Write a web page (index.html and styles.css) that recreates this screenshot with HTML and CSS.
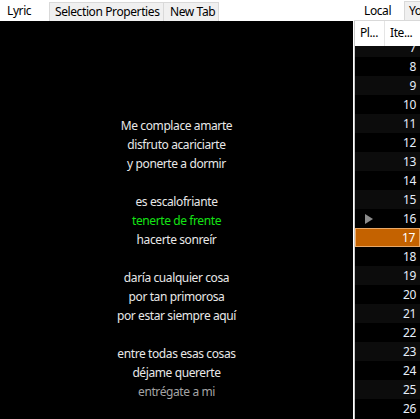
FILE: index.html
```html
<!DOCTYPE html>
<html>
<head>
<meta charset="utf-8">
<link rel="stylesheet" href="styles.css">
</head>
<body>
<div class="app">
  <div class="left">
    <div class="tabbar">
      <div class="tab active tab-lyric">Lyric</div>
      <div class="tab tab-sel">Selection Properties</div>
      <div class="tab tab-new">New Tab</div>
    </div>
    <div class="lyrics">
      <div class="line">Me complace amarte</div>
      <div class="line">disfruto acariciarte</div>
      <div class="line">y ponerte a dormir</div>
      <div class="line"></div>
      <div class="line">es escalofriante</div>
      <div class="line current">tenerte de frente</div>
      <div class="line">hacerte sonreír</div>
      <div class="line"></div>
      <div class="line">daría cualquier cosa</div>
      <div class="line">por tan primorosa</div>
      <div class="line">por estar siempre aquí</div>
      <div class="line"></div>
      <div class="line">entre todas esas cosas</div>
      <div class="line">déjame quererte</div>
      <div class="line dim">entrégate a mi</div>
    </div>
  </div>
  <div class="splitter"></div>
  <div class="right">
    <div class="tabbar rtabbar">
      <div class="tab active tab-local">Local</div>
      <div class="tab tab-yo">Yo</div>
    </div>
    <div class="list">
      <div class="header">
        <div class="hcol c1">Pl...</div>
        <div class="hcol c2">Ite...</div>
      </div>
      <div class="rows">
        <div class="rowsinner">
          <div class="row odd"><div class="c1"></div><div class="c2">7</div></div>
          <div class="row"><div class="c1"></div><div class="c2">8</div></div>
          <div class="row odd"><div class="c1"></div><div class="c2">9</div></div>
          <div class="row"><div class="c1"></div><div class="c2">10</div></div>
          <div class="row odd"><div class="c1"></div><div class="c2">11</div></div>
          <div class="row"><div class="c1"></div><div class="c2">12</div></div>
          <div class="row odd"><div class="c1"></div><div class="c2">13</div></div>
          <div class="row"><div class="c1"></div><div class="c2">14</div></div>
          <div class="row odd"><div class="c1"></div><div class="c2">15</div></div>
          <div class="row"><div class="c1"><span class="play"></span></div><div class="c2">16</div></div>
          <div class="row sel"><div class="c1"></div><div class="c2">17</div></div>
          <div class="row"><div class="c1"></div><div class="c2">18</div></div>
          <div class="row odd"><div class="c1"></div><div class="c2">19</div></div>
          <div class="row"><div class="c1"></div><div class="c2">20</div></div>
          <div class="row odd"><div class="c1"></div><div class="c2">21</div></div>
          <div class="row"><div class="c1"></div><div class="c2">22</div></div>
          <div class="row odd"><div class="c1"></div><div class="c2">23</div></div>
          <div class="row"><div class="c1"></div><div class="c2">24</div></div>
          <div class="row odd"><div class="c1"></div><div class="c2">25</div></div>
          <div class="row"><div class="c1"></div><div class="c2">26</div></div>
        </div>
      </div>
    </div>
  </div>
</div>
</body>
</html>
```
FILE: styles.css
```css
html, body {
  margin: 0;
  padding: 0;
  background: #ffffff;
}
body {
  font-family: "Noto Sans", "Open Sans", sans-serif;
  font-size: 12px;
  letter-spacing: -0.4px;
  width: 420px;
  height: 419px;
  overflow: hidden;
}
.app {
  display: flex;
  height: 419px;
}
.left {
  width: 353px;
  flex: none;
  display: flex;
  flex-direction: column;
}
.tabbar {
  height: 21px;
  display: flex;
  align-items: flex-end;
  background: #ffffff;
  flex: none;
}
.tab {
  box-sizing: border-box;
  flex: none;
  height: 19px;
  line-height: 17px;
  padding: 0 5px;
  background: #f0f0f0;
  border: 1px solid #d9d9d9;
  border-bottom: none;
  color: #000;
  white-space: nowrap;
  overflow: hidden;
}
.tab.active {
  height: 21px;
  line-height: 20px;
  background: #ffffff;
  border-color: #ffffff;
}
.tab-lyric { width: 49px; padding-left: 6px; }
.tab-sel { width: 115px; }
.tab-new { width: 55px; border-left: none; padding-left: 6px; }
.lyrics {
  flex: 1;
  background: #000;
  padding-top: 95px;
  text-align: center;
  color: #e8e8e8;
}
.line {
  height: 19px;
  line-height: 19px;
}
.line.current { color: #14e414; }
.line.dim { color: #a4a4a4; }
.splitter {
  width: 1px;
  flex: none;
  background: #ffffff;
}
.right {
  flex: 1;
  display: flex;
  flex-direction: column;
  min-width: 0;
  overflow: hidden;
}
.rtabbar {
  height: 20px;
  border-bottom: 1px solid #d9d9d9;
  padding-left: 1px;
}
.rtabbar .tab.active { height: 20px; line-height: 19px; }
.tab-local { width: 49px; padding-left: 8px; }
.tab-yo { width: 30px; padding-left: 4px; }
.list {
  flex: 1;
  display: flex;
  flex-direction: column;
  border-left: 1px solid #c8c8c8;
  min-height: 0;
}
.header {
  height: 25px;
  display: flex;
  background: #fff;
  flex: none;
}
.hcol {
  line-height: 24px;
  color: #000;
  white-space: nowrap;
  overflow: hidden;
}
.header .c1 {
  width: 30px;
  flex: none;
  padding-left: 5px;
  box-sizing: border-box;
  border-right: 1px solid #e5e5e5;
}
.header .c2 {
  flex: none;
  width: 40px;
  padding-left: 5px;
}
.rows {
  flex: 1;
  background: #000;
  overflow: hidden;
}
.rowsinner {
  margin-top: -8px;
}
.row {
  box-sizing: border-box;
  height: 19px;
  display: flex;
  align-items: center;
  color: #e6eefa;
}
.row.odd { background: #0c0c0c; }
.row.sel {
  background: #c46200;
  border: 1px solid #e8a868;
  color: #ffffff;
}
.row .c1 {
  width: 30px;
  flex: none;
  display: flex;
  align-items: center;
  padding-left: 10px;
  box-sizing: border-box;
}
.row .c2 {
  flex: 1;
  text-align: right;
  padding-right: 4px;
}
.play {
  width: 0;
  height: 0;
  border-top: 5px solid transparent;
  border-bottom: 5px solid transparent;
  border-left: 8px solid #8c8c8c;
}
```
